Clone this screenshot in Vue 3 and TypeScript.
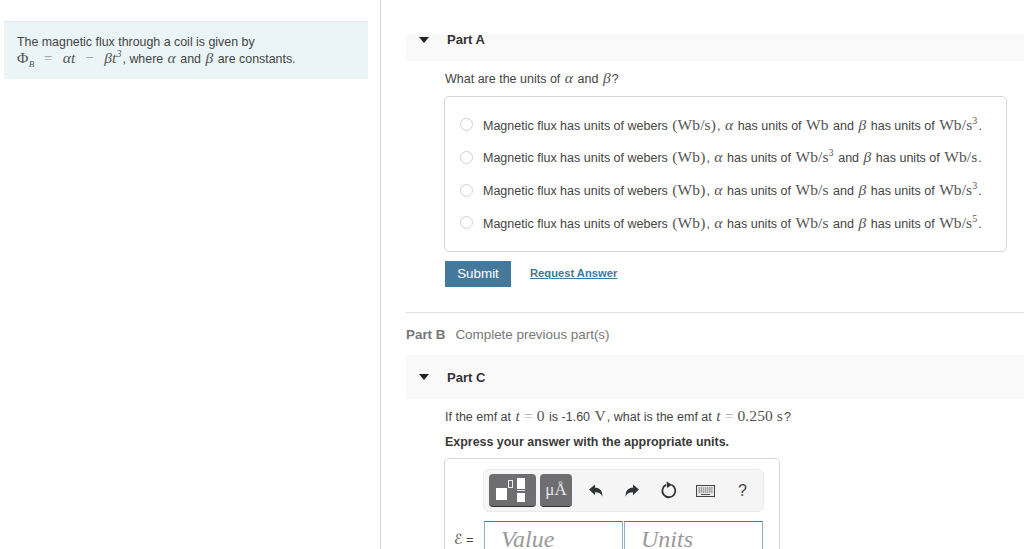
<script setup lang="ts">
interface Option { flux: string; a: string; aSup?: string; b: string; bSup?: string }
const options: Option[] = [
  { flux: 'Wb/s', a: 'Wb', b: 'Wb/s', bSup: '3' },
  { flux: 'Wb', a: 'Wb/s', aSup: '3', b: 'Wb/s' },
  { flux: 'Wb', a: 'Wb/s', b: 'Wb/s', bSup: '3' },
  { flux: 'Wb', a: 'Wb/s', b: 'Wb/s', bSup: '5' },
]
</script>

<template>
  <div class="page">
    <aside class="side">
      <div class="intro">
        <div>The magnetic flux through a coil is given by</div>
        <div class="intro-math">
          <span class="m phi">Φ<sub>B</sub></span><span class="m op">=</span><span class="m it">αt</span><span class="m op">−</span><span class="m it">βt<sup>3</sup></span>, where <span class="m it">α</span> and <span class="m it">β</span> are constants.
        </div>
      </div>
    </aside>
    <main class="main">
      <header class="part-head first">
        <span class="tri"></span><span class="part-title">Part A</span>
      </header>
      <section class="body">
        <p class="q">What are the units of <span class="m it">α</span> and <span class="m it">β</span>?</p>
        <div class="choices">
          <label v-for="(o, i) in options" :key="i" class="choice">
            <span class="radio"></span>
            <span>Magnetic flux has units of webers <span class="m">({{ o.flux }})</span>, <span class="m it">α</span> has units of <span class="m">{{ o.a }}<sup v-if="o.aSup">{{ o.aSup }}</sup></span> and <span class="m it">β</span> has units of <span class="m">{{ o.b }}<sup v-if="o.bSup">{{ o.bSup }}</sup></span>.</span>
          </label>
        </div>
        <div class="actions">
          <button class="submit" type="button">Submit</button>
          <a class="link" href="#">Request Answer</a>
        </div>
      </section>
      <div class="part-b"><b>Part B</b><span>Complete previous part(s)</span></div>
      <header class="part-head">
        <span class="tri"></span><span class="part-title">Part C</span>
      </header>
      <section class="body c">
        <p class="q">If the emf at <span class="m it">t</span><span class="m op2">=</span><span class="m">0</span> is -1.60 <span class="m">V</span>, what is the emf at <span class="m it">t</span><span class="m op2">=</span><span class="m">0.250 s</span>?</p>
        <p class="express">Express your answer with the appropriate units.</p>
        <div class="answer">
          <div class="toolbar">
            <button class="tool tpl" type="button" aria-label="Templates">
              <svg width="47" height="32" viewBox="0 0 47 32">
                <rect x="7" y="14" width="11" height="12" fill="#fff" />
                <rect x="19.500" y="6.500" width="4" height="7" fill="none" stroke="#eee" />
                <rect x="28" y="4" width="8" height="11" fill="#fff" />
                <rect x="28" y="16" width="8" height="1" fill="#ddd" />
                <rect x="28" y="19" width="8" height="9" fill="#fff" />
              </svg>
            </button>
            <button class="tool units" type="button">μÅ</button>
            <svg class="ic i1" width="16" height="16" viewBox="0 0 16 16"><path d="M1 6.500 7 1.500v3.200c4.500 0 7.500 2.500 7.500 9-1.200-3.200-3.500-4.500-7.500-4.500v3z" fill="#2f3437" /></svg>
            <svg class="ic i2" width="16" height="16" viewBox="0 0 16 16"><path d="M15 6.500 9 1.500v3.200c-4.500 0-7.500 2.500-7.500 9 1.200-3.200 3.500-4.500 7.500-4.500v3z" fill="#2f3437" /></svg>
            <svg class="ic i3" width="18" height="18" viewBox="0 0 18 18"><path d="M11.500 3.800A6.500 6.500 0 1 1 6 3.900" fill="none" stroke="#2f3437" stroke-width="1.800" /><path d="M6.500 0.500 12 3.800 7 7z" fill="#2f3437" /></svg>
            <svg class="ic i4" width="19" height="12" viewBox="0 0 19 12">
              <rect x=".5" y=".5" width="18" height="11" fill="#e8e8e8" stroke="#444" />
              <path d="M2.500 3h14M2.500 5h14M2.500 7h14" stroke="#666" stroke-dasharray="1.500 .6" />
              <path d="M5 9.500h9" stroke="#555" />
            </svg>
            <span class="help">?</span>
          </div>
          <div class="inputs">
            <span class="lbl"><span class="script">ℰ</span> =</span>
            <div class="field">Value</div>
            <div class="field">Units</div>
          </div>
        </div>
      </section>
    </main>
  </div>
</template>

<style>
html, body { margin: 0; background: #fff; }
</style>

<style scoped>
.page {
  display: flex;
  width: 1024px;
  height: 549px;
  overflow: hidden;
  font-family: "Liberation Sans", Arial, sans-serif;
  font-size: 12.5px;
  color: #444;
}
.side {
  box-sizing: border-box;
  width: 381px;
  flex: none;
  padding: 21px 12px 0 4px;
  border-right: 1px solid #c6d6e4;
}
.intro {
  box-sizing: border-box;
  height: 58px;
  padding: 12px 13px 0;
  background: #ebf4f6;
  border-top: 1px solid #dfe6ec;
  line-height: 17px;
  font-size: 12.400px;
}
.intro-math { margin-top: -1px; }
.m {
  margin: 0 1px;
  font-family: "Liberation Serif", "Times New Roman", serif;
  font-size: 15.500px;
  line-height: 1;
  letter-spacing: .1px;
  color: #555;
}
.it { font-style: italic; }
.phi { letter-spacing: .5px; margin: 0; }
.phi sub { font-size: 9px; font-style: italic; line-height: 0; }
.op { margin: 0 9px; color: #999; }
.op2 { margin: 0 3px; color: #aaa; }
sup { font-size: 10px; line-height: 0; }
.main { flex: 1; min-width: 0; padding: 34px 0 0 25px; }
.part-head {
  display: flex;
  align-items: center;
  height: 44px;
  padding-left: 13px;
  background: #f9f9f9;
}
.part-head.first { height: 27px; align-items: flex-start; }
.part-head.first .part-title { margin-top: -2px; }
.part-head.first .tri { margin-top: 3px; }
.tri {
  width: 0;
  height: 0;
  margin-right: 18px;
  border: 5px solid transparent;
  border-top: 6px solid #222;
  border-bottom: 0;
}
.part-title { font-weight: 700; font-size: 13px; color: #333; line-height: 15px; }
.body { padding: 9px 17px 0 39px; }
.q { margin: 0; line-height: 17px; height: 26px; }
.choices {
  box-sizing: border-box;
  height: 156px;
  margin-left: -1px;
  padding: 11.500px 0 0 15px;
  border: 1px solid #d6d6d6;
  border-radius: 5px;
}
.choice { display: flex; align-items: center; height: 32.670px; white-space: nowrap; }
.radio {
  box-sizing: border-box;
  width: 13px;
  height: 13px;
  margin-right: 10px;
  border: 1px solid #d2d2d2;
  border-radius: 50%;
  background: #fff;
}
.actions { display: flex; align-items: center; margin-top: 9px; height: 26px; }
.submit {
  width: 66px;
  height: 26px;
  padding: 0 0 2px;
  border: 0;
  background: #45799c;
  color: #fff;
  font: 13.400px "Liberation Sans", Arial, sans-serif;
}
.link { margin: -2px 0 0 19px; color: #3f779b; font-weight: 700; font-size: 11.200px; }
.part-b {
  display: flex;
  gap: 10px;
  align-items: center;
  box-sizing: border-box;
  height: 43px;
  margin-top: 25px;
  border-top: 1px solid #e0e0e0;
  font-size: 13.400px;
  color: #777;
}
.body.c { padding-top: 9px; }
.c .q { height: 25px; }
.express { margin: 1px 0 0; font-weight: 700; line-height: 17px; font-size: 12.450px; color: #3a3a3a; }
.answer {
  box-sizing: border-box;
  width: 336px;
  height: 120px;
  margin: 7px 0 0 -1px;
  padding: 10px 15px 0 38px;
  border: 1px solid #d6d6d6;
  border-radius: 5px;
}
.toolbar {
  position: relative;
  box-sizing: border-box;
  display: flex;
  gap: 4px;
  align-items: center;
  height: 43px;
  padding-left: 5px;
  background: #f5f5f5;
  border: 1px solid #ebebeb;
  border-radius: 6px;
}
.tool {
  height: 33px;
  padding: 0;
  border: 0;
  border-bottom: 1px solid #333;
  border-radius: 4px;
  background: #6e6e70;
  color: #fff;
}
.tpl { display: flex; align-items: center; justify-content: center; width: 47px; }
.units { width: 32px; font-family: "Liberation Serif", serif; font-size: 17px; color: #e6e6e6; }
.ic { position: absolute; }
.i1 { left: 104px; top: 13px; }
.i2 { left: 140px; top: 13px; }
.i3 { left: 176px; top: 11px; }
.i4 { left: 212px; top: 15px; }
.help { position: absolute; left: 254px; top: 12px; font-size: 16px; color: #444; }
.inputs { display: flex; gap: 1px; align-items: flex-start; margin-top: 9px; margin-left: -31px; }
.lbl { width: 31px; padding-left: 2px; box-sizing: border-box; font-size: 13px; line-height: 20px; margin-top: 8px; white-space: nowrap; }
.script { font-family: "DejaVu Sans", sans-serif; font-size: 14px; }
.field {
  box-sizing: border-box;
  width: 139px;
  height: 40px;
  padding: 4px 0 0 16px;
  border: 1px solid #8eb3c8;
  border-top-color: #3f7b9c;
  font: italic 24px "Liberation Serif", serif;
  color: #9a9a9a;
}
</style>
